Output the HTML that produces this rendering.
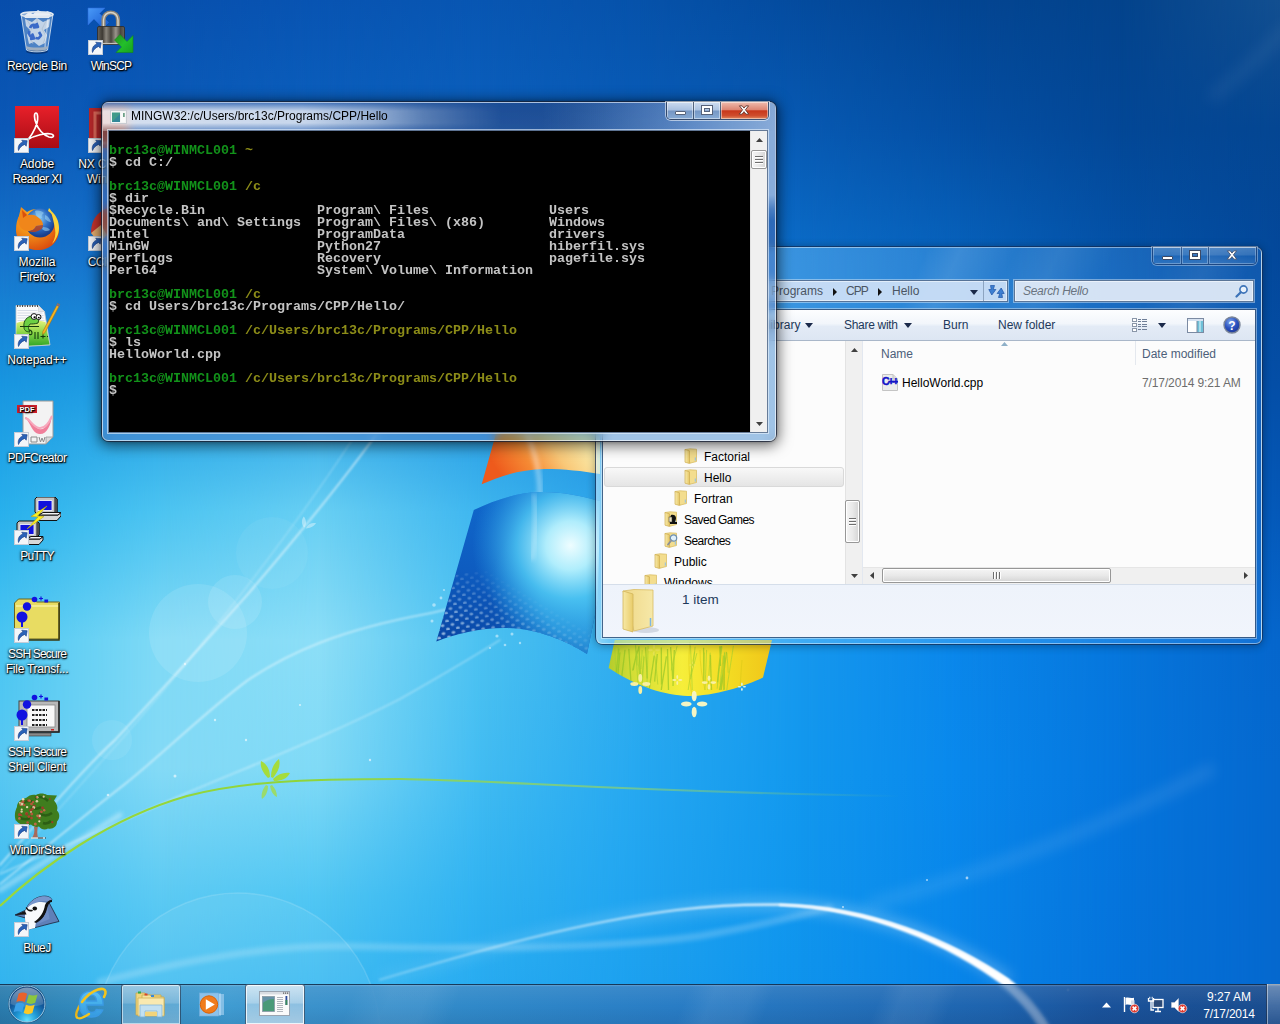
<!DOCTYPE html>
<html>
<head>
<meta charset="utf-8">
<title>Desktop</title>
<style>
*{box-sizing:border-box;margin:0;padding:0}
html,body{width:1280px;height:1024px;overflow:hidden}
body{position:relative;font-family:"Liberation Sans",sans-serif;font-size:12px;color:#000;background:#1878d0}
.abs{position:absolute}
#wall{position:absolute;left:0;top:0;width:1280px;height:1024px;overflow:hidden}
.wl{position:absolute;left:0;top:0;width:1280px;height:1024px}
#wallsvg{position:absolute;left:0;top:0}
/* ---------- desktop icons ---------- */
.dicon{position:absolute;width:74px;height:90px;text-align:center;color:#fff;font-size:12px;line-height:15px;
 text-shadow:0 1px 2px #000,0 0 3px rgba(0,0,0,.85),1px 1px 1px rgba(0,0,0,.9)}
.dicon svg{position:absolute;left:13px;top:0}
.dicon span{position:absolute;left:-6px;right:-6px;top:52px;display:block;white-space:nowrap}
.dicon i{font-style:normal}
/* ---------- taskbar ---------- */
#taskbar{position:absolute;left:0;top:984px;width:1280px;height:40px;
 background:linear-gradient(180deg,rgba(18,44,72,.85) 0,rgba(18,44,72,.85) 1px,rgba(255,255,255,.28) 1px,rgba(255,255,255,.12) 2px,rgba(255,255,255,.07) 3px,rgba(255,255,255,0) 55%,rgba(0,10,40,.08) 100%),
 linear-gradient(90deg,rgba(42,118,166,.9) 0,rgba(47,130,180,.9) 60px,rgba(58,144,196,.9) 150px,rgba(62,152,206,.9) 230px,rgba(58,142,200,.9) 300px,rgba(48,132,196,.9) 500px,rgba(42,120,192,.9) 700px,rgba(36,104,176,.9) 900px,rgba(32,96,168,.9) 1000px,rgba(28,79,148,.9) 1100px,rgba(28,74,136,.9) 1280px)}
/* ---------- windows ---------- */
.win{position:absolute}
#expl{left:596px;top:247px;width:666px;height:397px;box-shadow:0 0 0 1px rgba(20,45,85,.72),0 1px 8px 1px rgba(0,0,0,.32)}
#explglass{background:linear-gradient(90deg,rgba(200,238,255,.6) 0,rgba(170,225,255,.5) 12px,rgba(120,200,255,.42) 200px,rgba(100,185,255,.3) 400px,rgba(80,160,250,.18) 100%);border-color:rgba(255,255,255,.45)}
#explglass:after{content:"";position:absolute;left:0;right:0;top:0;height:62px;background:linear-gradient(115deg,rgba(255,255,255,0) 300px,rgba(255,255,255,.10) 330px,rgba(255,255,255,.02) 380px,rgba(255,255,255,.08) 420px,rgba(255,255,255,0) 470px,rgba(255,255,255,0) 520px,rgba(255,255,255,.06) 560px,rgba(255,255,255,0) 600px)}
.capbtns.inact{border-color:rgba(30,60,110,.7);box-shadow:0 0 0 1px rgba(255,255,255,.35)}
.inact .cb{background:linear-gradient(180deg,rgba(255,255,255,.22) 0,rgba(255,255,255,.14) 48%,rgba(255,255,255,.02) 52%,rgba(255,255,255,.10) 100%);border-right-color:rgba(30,60,110,.6);box-shadow:inset 0 0 0 1px rgba(255,255,255,.28)}
.inact .cmin i,.inact .cmax i{border-color:#fff;outline-color:#3d4a66}
.inact .cmin i{border-color:#3d4a66}
.inact .cmax i{box-shadow:inset 0 0 0 1px #3d4a66}
#addr{position:absolute;left:53px;top:33px;width:359px;height:22px;background:rgba(205,224,246,.93);border:1px solid rgba(50,80,120,.75);box-shadow:0 0 0 1px rgba(255,255,255,.4),inset 0 0 0 1px rgba(255,255,255,.5)}
.crumb{position:absolute;top:3px;font-size:12px;line-height:15px;color:#4a5563;white-space:nowrap}
.tri{position:absolute;top:7px;width:0;height:0;border-left:4px solid #111;border-top:4px solid transparent;border-bottom:4px solid transparent}
.dtri{position:absolute;width:0;height:0;border-top:5px solid #1b2a4a;border-left:4.5px solid transparent;border-right:4.5px solid transparent}
#srch{position:absolute;left:418px;top:33px;width:240px;height:22px;background:rgba(222,233,247,.95);border:1px solid rgba(50,80,120,.75);box-shadow:0 0 0 1px rgba(255,255,255,.4),inset 0 0 0 1px rgba(255,255,255,.5)}
#srch span{position:absolute;left:8px;top:3px;letter-spacing:-.3px;font-style:italic;color:#6a7480;font-size:12px;line-height:15px;white-space:nowrap}
#eclient{position:absolute;left:7px;top:63px;width:652px;height:327px;background:#fcfcfc;box-shadow:0 0 0 1px rgba(40,70,110,.8),0 0 0 2px rgba(255,255,255,.4);overflow:hidden}
#tbar{position:absolute;left:0;top:0;width:652px;height:31px;background:linear-gradient(180deg,#fdfeff 0,#f2f6fb 45%,#e3ebf6 55%,#dde6f3 100%);border-bottom:1px solid #a9b7c9}
.ti{position:absolute;top:8px;font-size:12px;line-height:15px;color:#1e395b;white-space:nowrap}
#nav{position:absolute;left:0;top:31px;width:242px;height:243px;overflow:hidden;background:#fcfcfc}
.trow{position:absolute;height:20px;white-space:nowrap;font-size:12px;line-height:20px;color:#000}
.trow .fld{position:absolute;left:0;top:2px;width:16px;height:16px}
.trow span{position:absolute;left:21px;top:1px}
#hl{position:absolute;left:1px;top:126px;width:240px;height:20px;border:1px solid #d9d9d9;border-radius:3px;background:linear-gradient(180deg,#f8f8f8,#e5e5e5)}
#flist{position:absolute;left:260px;top:31px;width:392px;height:226px;background:#fcfcfc}
.ch{position:absolute;top:6px;font-size:12px;line-height:15px;color:#4c607a;white-space:nowrap}
.fn{position:absolute;font-size:12px;line-height:15px;white-space:nowrap}
#hsb{position:absolute;left:260px;top:257px;width:392px;height:17px;background:#f0f0f0;border-top:1px solid #e6e6e6}
#hthumb{position:absolute;left:19px;top:0px;width:229px;height:15px;border:1px solid #979797;border-radius:2px;background:linear-gradient(180deg,#f5f5f5 0,#e9e9e9 50%,#d4d4d4 100%);box-shadow:inset 0 0 0 1px #fff}
#hthumb i{position:absolute;left:50%;margin-left:-4px;top:3px;bottom:3px;width:8px;background:repeating-linear-gradient(90deg,#6e6e6e 0,#6e6e6e 1px,#fff 1px,#fff 2px,transparent 2px,transparent 3px)}
#dpane{position:absolute;left:0;top:274px;width:652px;height:53px;background:linear-gradient(180deg,#eef3fb,#f1f5fc);border-top:1px solid #d5deea}
.tbstripes{position:absolute;left:0;top:1px;width:1280px;height:39px;background:linear-gradient(112deg,rgba(255,255,255,0) 330px,rgba(255,255,255,.07) 365px,rgba(255,255,255,.07) 400px,rgba(255,255,255,0) 430px,rgba(255,255,255,0) 640px,rgba(255,255,255,.07) 665px,rgba(255,255,255,.06) 700px,rgba(255,255,255,0) 720px,rgba(255,255,255,0) 820px,rgba(255,255,255,.07) 840px,rgba(255,255,255,.06) 870px,rgba(255,255,255,0) 890px)}
.tbtn{position:absolute;top:0px;height:40px;border:1px solid rgba(20,50,80,.7);border-bottom:none;border-radius:3px 3px 0 0;background:linear-gradient(180deg,rgba(255,255,255,.45) 0,rgba(255,255,255,.30) 45%,rgba(255,255,255,.18) 50%,rgba(255,255,255,.28) 100%);box-shadow:inset 0 0 0 1px rgba(255,255,255,.55)}
.tbtn.act{background:linear-gradient(180deg,rgba(255,255,255,.72) 0,rgba(255,255,255,.55) 45%,rgba(255,255,255,.42) 50%,rgba(255,255,255,.55) 100%);box-shadow:inset 0 0 0 1px rgba(255,255,255,.8)}
.clock{position:absolute;left:1196px;top:5px;width:66px;text-align:center;color:#fff;font-size:12px;line-height:17px;white-space:nowrap}
.clock div+div{letter-spacing:-.2px}
.showdesk{position:absolute;left:1266px;top:0;width:14px;height:40px;border-left:1px solid rgba(20,40,70,.7);background:linear-gradient(180deg,rgba(255,255,255,.30),rgba(255,255,255,.08));box-shadow:inset 1px 0 0 rgba(255,255,255,.45),inset 0 1px 0 rgba(255,255,255,.4)}

.win{position:absolute;border-radius:7px;box-shadow:0 0 0 1px rgba(25,35,55,.78),0 2px 14px 3px rgba(0,0,0,.55),0 0 4px rgba(0,0,0,.4)}
.glass{position:absolute;left:0;top:0;right:0;bottom:0;border-radius:6px;border:1px solid rgba(255,255,255,.65)}
#term{left:102px;top:102px;width:674px;height:339px}
#termblur{position:absolute;left:0;top:0;right:0;bottom:0;border-radius:6px;-webkit-backdrop-filter:blur(5px);backdrop-filter:blur(5px)}
#termglass{background:rgb(142,184,228);mix-blend-mode:multiply;border:none}
#termglass2{position:absolute;left:0;top:0;right:0;bottom:0;border-radius:6px;background:linear-gradient(180deg,rgb(30,34,22) 0,rgb(40,44,34) 30px,rgb(42,44,34) 100%);mix-blend-mode:screen}
#termglass3{position:absolute;left:0;top:0;right:0;bottom:0;border-radius:6px;border:1px solid rgba(255,255,255,.62)}
.titleglow{position:absolute;left:1px;top:1px;width:400px;height:28px;border-radius:5px 0 0 0;background:linear-gradient(90deg,rgba(255,246,248,.86) 0,rgba(255,255,255,.8) 30px,rgba(255,255,255,.74) 200px,rgba(255,255,255,.52) 270px,rgba(255,255,255,.26) 320px,rgba(255,255,255,.1) 365px,rgba(255,255,255,0) 400px);-webkit-mask-image:linear-gradient(180deg,rgba(0,0,0,.25) 0,#000 8px,#000 20px,rgba(0,0,0,.35) 28px);mask-image:linear-gradient(180deg,rgba(0,0,0,.25) 0,#000 8px,#000 20px,rgba(0,0,0,.35) 28px)}
.tdark{position:absolute;left:1px;top:1px;right:1px;height:28px;border-radius:5px 5px 0 0;background:linear-gradient(90deg,rgba(8,36,84,0) 200px,rgba(8,36,84,.26) 330px,rgba(8,36,84,.26) 470px,rgba(8,36,84,0) 600px)}
.wtitle{position:absolute;left:29px;top:7px;font-size:12px;line-height:15px;white-space:nowrap;color:#000;letter-spacing:0px}
.capbtns{position:absolute;top:0;height:18px;display:flex;border:1px solid rgba(40,55,80,.75);border-top:none;border-radius:0 0 5px 5px;box-shadow:0 0 0 1px rgba(255,255,255,.55);overflow:hidden}
.cb{height:17px;position:relative;border-right:1px solid rgba(40,55,80,.7);box-shadow:inset 0 0 0 1px rgba(255,255,255,.45)}
.cb:last-child{border-right:none}
.cmin,.cmax{width:27px;background:linear-gradient(180deg,rgba(225,235,248,.85) 0,rgba(190,208,232,.8) 48%,rgba(120,152,196,.9) 52%,rgba(140,175,215,.9) 100%)}
.cclose{width:47px;background:linear-gradient(180deg,#efbcae 0,#dd8673 45%,#c8371b 52%,#cf4d2d 80%,#e08b62 100%)}
.cclose svg{position:absolute;left:17px;top:3px;width:12px;height:10px}
.cmin i{position:absolute;left:8px;top:9px;width:11px;height:4px;background:#fff;border:1px solid #56627a;border-radius:1px}
.cmax i{position:absolute;left:8px;top:4px;width:10px;height:8px;background:transparent;border:2px solid #fff;outline:1px solid #56627a;box-shadow:inset 0 0 0 1px #56627a}
#termclient{position:absolute;left:7px;top:29px;width:658px;height:301px;background:#000;box-shadow:0 0 0 1px rgba(70,90,120,.75),0 0 0 2px rgba(235,245,255,.6)}
#tt{position:absolute;left:0;top:1.5px;font-family:"Liberation Mono",monospace;font-weight:bold;font-size:13.333px;line-height:12px;color:#c4c4c4;letter-spacing:0}
#tt b{font-weight:bold}
#tt .g{color:#12921a}
#tt .y{color:#8c8c18}
.vsb{position:absolute;width:17px;background:#f0f0f0;border-left:1px solid #e3e3e3}
.sbtn{position:absolute;left:0;width:17px;height:17px}
.sbtn svg{position:absolute;left:4px;top:6px}
.sthumb{position:absolute;left:0px;width:16px;border:1px solid #979797;border-radius:2px;background:linear-gradient(90deg,#f5f5f5 0,#e9e9e9 50%,#d4d4d4 100%);box-shadow:inset 0 0 0 1px #fff}
.sthumb i{position:absolute;left:3px;right:3px;top:50%;margin-top:-4px;height:8px;background:repeating-linear-gradient(180deg,#6e6e6e 0,#6e6e6e 1px,#fff 1px,#fff 2px,transparent 2px,transparent 3px)}

.refl1{position:absolute;left:440px;top:1px;right:1px;height:28px;border-radius:0 5px 0 0;background:linear-gradient(90deg,rgba(190,214,242,0) 0,rgba(190,214,242,.12) 60px,rgba(190,214,242,.3) 130px,rgba(190,214,242,.5) 190px,rgba(196,218,244,.62) 100%)}
.refl2{position:absolute;right:1px;top:29px;width:8px;height:90px;background:linear-gradient(180deg,rgba(196,218,244,.62) 0,rgba(196,218,244,.6) 64px,rgba(196,218,244,.2) 78px,rgba(196,218,244,0) 90px)}

</style>
</head>
<body>
<div id="wall">
<div class="wl" style="background:linear-gradient(180deg,#084eac 0px,#0b58b6 128px,#1674cc 256px,#1896e0 384px,#28b0ec 512px,#4ac6f2 640px,#58c8f2 768px,#40bcf0 896px,#2cb0ee 1024px);"></div>
<div class="wl" style="background:linear-gradient(180deg,#0850ae 0px,#0b5cba 128px,#1672cc 256px,#229ee4 384px,#4cc4f1 512px,#80daf6 640px,#84daf6 768px,#5ccaf3 896px,#3cbaf1 1024px);-webkit-mask-image:linear-gradient(90deg,transparent 0px,#000 160px);mask-image:linear-gradient(90deg,transparent 0px,#000 160px);"></div>
<div class="wl" style="background:linear-gradient(180deg,#0854b2 0px,#0b60be 128px,#1572cc 256px,#28a2e6 384px,#68cff3 512px,#8cdef7 640px,#80daf6 768px,#50c6f3 896px,#36b6f1 1024px);-webkit-mask-image:linear-gradient(90deg,transparent 160px,#000 320px);mask-image:linear-gradient(90deg,transparent 160px,#000 320px);"></div>
<div class="wl" style="background:linear-gradient(180deg,#0856b2 0px,#0b60be 128px,#1270ca 256px,#2496e0 384px,#3eb6ef 512px,#4cc2f1 640px,#42bcf2 768px,#30b2f1 896px,#24a8f0 1024px);-webkit-mask-image:linear-gradient(90deg,transparent 320px,#000 480px);mask-image:linear-gradient(90deg,transparent 320px,#000 480px);"></div>
<div class="wl" style="background:linear-gradient(180deg,#0652aa 0px,#095cb8 128px,#0e70cc 256px,#1884d6 384px,#2aa2ea 512px,#2eaaee 640px,#26a8f0 768px,#20a4f0 896px,#1a9eee 1024px);-webkit-mask-image:linear-gradient(90deg,transparent 480px,#000 640px);mask-image:linear-gradient(90deg,transparent 480px,#000 640px);"></div>
<div class="wl" style="background:linear-gradient(180deg,#044b9e 0px,#0759b2 128px,#0b6cc8 256px,#0e74ce 384px,#1488de 512px,#1698ee 640px,#1298ee 768px,#1096ee 896px,#0e92ec 1024px);-webkit-mask-image:linear-gradient(90deg,transparent 640px,#000 800px);mask-image:linear-gradient(90deg,transparent 640px,#000 800px);"></div>
<div class="wl" style="background:linear-gradient(180deg,#034592 0px,#044fa4 128px,#0762bc 256px,#0968c4 384px,#0c78d6 512px,#0a86ea 640px,#0988ec 768px,#0886ea 896px,#0884e8 1024px);-webkit-mask-image:linear-gradient(90deg,transparent 800px,#000 960px);mask-image:linear-gradient(90deg,transparent 800px,#000 960px);"></div>
<div class="wl" style="background:linear-gradient(180deg,#03438c 0px,#034796 128px,#0452a8 256px,#055ab6 384px,#0668c8 512px,#0676dc 640px,#0576de 768px,#0574dc 896px,#0572da 1024px);-webkit-mask-image:linear-gradient(90deg,transparent 960px,#000 1120px);mask-image:linear-gradient(90deg,transparent 960px,#000 1120px);"></div>
<div class="wl" style="background:linear-gradient(180deg,#124f90 0px,#044692 128px,#03489a 256px,#044ea6 384px,#0458b8 512px,#0566cc 640px,#0568ce 768px,#0568ce 896px,#0568ce 1024px);-webkit-mask-image:linear-gradient(90deg,transparent 1120px,#000 1280px);mask-image:linear-gradient(90deg,transparent 1120px,#000 1280px);"></div>
</div>
<svg id="wallsvg" width="1280" height="1024" viewBox="0 0 1280 1024">
<defs>
 <filter id="b2" x="-20%" y="-20%" width="140%" height="140%"><feGaussianBlur stdDeviation="2"/></filter>
 <filter id="b1" x="-20%" y="-20%" width="140%" height="140%"><feGaussianBlur stdDeviation="0.8"/></filter>
 <filter id="b6" x="-30%" y="-30%" width="160%" height="160%"><feGaussianBlur stdDeviation="7"/></filter>
 <filter id="b20" x="-50%" y="-50%" width="200%" height="200%"><feGaussianBlur stdDeviation="22"/></filter>
 <linearGradient id="flB" x1=".4" y1="0" x2=".15" y2="1"><stop offset="0" stop-color="#1068cc"/><stop offset=".5" stop-color="#0e5cc0"/><stop offset="1" stop-color="#0844a2"/></linearGradient>
 <radialGradient id="flBh" cx=".82" cy=".33" r=".6"><stop offset="0" stop-color="#eefdff" stop-opacity="1"/><stop offset=".25" stop-color="#b4f0fd" stop-opacity=".97"/><stop offset=".55" stop-color="#4cc4f2" stop-opacity=".85"/><stop offset="1" stop-color="#2aa0e6" stop-opacity="0"/></radialGradient>
 <radialGradient id="flBh2" cx=".95" cy=".62" r=".62"><stop offset="0" stop-color="#40b8ee" stop-opacity=".95"/><stop offset=".5" stop-color="#34aae8" stop-opacity=".75"/><stop offset="1" stop-color="#2090e0" stop-opacity="0"/></radialGradient>
 <linearGradient id="flR" x1="0" y1=".3" x2="1" y2="0"><stop offset="0" stop-color="#ee5a1c"/><stop offset=".28" stop-color="#f58a34"/><stop offset=".55" stop-color="#f9c878"/><stop offset=".82" stop-color="#faeaa8"/><stop offset="1" stop-color="#fbf0b8"/></linearGradient>
 <linearGradient id="flY" x1="0" y1="0" x2="1" y2="0"><stop offset="0" stop-color="#b4cc2c"/><stop offset=".15" stop-color="#d4de36"/><stop offset=".45" stop-color="#f6ee3a"/><stop offset=".75" stop-color="#f3da22"/><stop offset="1" stop-color="#f0c61a"/></linearGradient>
 <g id="fl4"><ellipse cx="0" cy="-6" rx="1.900" ry="4"/><ellipse cx="0" cy="6" rx="1.900" ry="4"/><ellipse cx="-6" cy="0" rx="4" ry="1.900"/><ellipse cx="6" cy="0" rx="4" ry="1.900"/></g>
 <linearGradient id="arcG" x1="379" y1="0" x2="1010" y2="0" gradientUnits="userSpaceOnUse"><stop offset="0" stop-color="#fff" stop-opacity=".25"/><stop offset=".45" stop-color="#fff" stop-opacity=".7"/><stop offset=".7" stop-color="#fff" stop-opacity="1"/><stop offset="1" stop-color="#fff" stop-opacity="1"/></linearGradient>
 <linearGradient id="vineG" x1="0" y1="0" x2="900" y2="0" gradientUnits="userSpaceOnUse"><stop offset="0" stop-color="#9ad83a"/><stop offset=".35" stop-color="#8fd43a"/><stop offset=".7" stop-color="#9ad860" stop-opacity=".6"/><stop offset="1" stop-color="#9ad860" stop-opacity="0"/></linearGradient>
 <pattern id="dots" width="10" height="8" patternUnits="userSpaceOnUse" patternTransform="rotate(-7)"><ellipse cx="3" cy="3" rx="1.900" ry="1.400" fill="#e6f8ff" opacity=".9"/><ellipse cx="8" cy="7" rx="1.900" ry="1.400" fill="#e6f8ff" opacity=".9"/></pattern>
 <linearGradient id="dmg" x1="0" y1="1" x2="1" y2="0"><stop offset="0" stop-color="#ddd"/><stop offset=".3" stop-color="#888"/><stop offset=".62" stop-color="#000"/></linearGradient>
 <mask id="dotmask" maskUnits="userSpaceOnUse" x="430" y="560" width="175" height="100"><rect x="430" y="560" width="175" height="100" fill="url(#dmg)"/></mask>
</defs>
<!-- soft light blobs -->
<circle cx="198" cy="633" r="49" fill="#fff" opacity=".11"/>
<circle cx="235" cy="602" r="27" fill="#fff" opacity=".11"/>
<circle cx="272" cy="553" r="36" fill="#fff" opacity=".05"/>
<circle cx="112" cy="740" r="20" fill="#fff" opacity=".08"/>
<circle cx="238" cy="1035" r="142" fill="#fff" opacity=".07"/>
<circle cx="238" cy="1035" r="142" fill="none" stroke="#fff" stroke-width="1.500" opacity=".14"/>
<!-- streaks -->
<g fill="none" stroke="#fff" stroke-linecap="round">
 <path d="M0 865C40 820 80 772 115 740 160 692 205 642 248 594 290 545 340 485 378 432" stroke-width="1.700" opacity=".6" filter="url(#b1)"/>
 <path d="M0 872C45 826 88 776 121 740 200 650 290 535 352 440" stroke-width="1" opacity=".4" filter="url(#b1)"/>
 <path d="M0 884C45 848 85 815 125 784 165 752 205 712 248 680 290 652 340 630 426 614 450 609 470 604 490 600" stroke-width="1.600" opacity=".55" filter="url(#b1)"/>
 <path d="M0 874C60 848 125 820 187 793 260 762 330 735 400 699 430 682 460 665 500 640" stroke-width="1.400" opacity=".42" filter="url(#b1)"/>
 <path d="M0 890C40 865 80 840 120 815" stroke-width="5" opacity=".4" filter="url(#b2)"/>
 <path d="M100 982C200 956 280 946 340 946 450 949 600 950 700 936 760 926 800 915 830 908" stroke-width="7" opacity=".2" filter="url(#b2)"/>
 <path d="M870 905C960 880 1080 840 1210 770" stroke-width="9" opacity=".13" filter="url(#b6)"/>
 <path d="M1215 95C1240 75 1262 55 1285 30" stroke-width="14" opacity=".05" filter="url(#b6)"/>
</g>
<!-- big white arc bottom -->
<path d="M379 980C480 950 580 922 677 910 720 905 750 904 779 904.700 870 907 950 940 1009 981" fill="none" stroke="url(#arcG)" stroke-width="9" opacity=".35" filter="url(#b6)"/>
<path d="M379 980C480 950 580 922 677 910 720 905 750 904 779 904.700 870 907 950 940 1009 981" fill="none" stroke="url(#arcG)" stroke-width="2.200" filter="url(#b1)"/>
<path d="M779 904.200C870 906 952 940 1012 981 1030 996 1040 1010 1052 1030L1040 1030C1030 1014 1019 1000 1004 986 949 945 870 909.500 779 905.700Z" fill="#fff" filter="url(#b1)"/>
<!-- green vine -->
<path d="M0 906C40 868 110 818 187 796 240 782 300 779 400 779 500 780 620 792 900 796" fill="none" stroke="url(#vineG)" stroke-width="2.200"/>
<g fill="#a5dc3c"><path d="M268 778c-6-6-8-12-7-17 6 3 9 9 9 16zM271 777c0-8 3-14 8-18 2 7-1 13-6 19zM273 779c5-5 11-7 17-6-3 6-9 8-16 8z"/><path d="M266 785c-4 5-5 10-4 14 4-3 6-8 6-13zM270 786c1 5 3 9 7 11 0-5-2-9-5-12z" opacity=".75"/></g>
<g transform="translate(305 528) rotate(25)" fill="#fff" opacity=".4"><path d="M-1 0c-4-2-6-6-5-10 4 2 6 6 5 10z"/><path d="M1 0c0-5 3-8 7-9-1 4-3 7-7 9z"/></g>
<!-- windows flag -->
<g>
 <path d="M497 430L481.700 484.300C500 476 520 469.500 545 469 565 469 582 471 600 474L600 430Z" fill="url(#flR)"/>
 <path d="M526 430C534 450 540 470 540 492 540 510 538 525 536 540" fill="none" stroke="#fff" stroke-width="5" opacity=".38" filter="url(#b2)"/>
 <path d="M473.800 510C495 500 515 493 540 492 562 491.500 580 496 600 501L598 600 587 654C565 640 535 628 504 628 480 628 455 634 436.300 641.600Z" fill="url(#flB)"/>
 <path d="M473.800 510C495 500 515 493 540 492 562 491.500 580 496 600 501L598 600 587 654C565 640 535 628 504 628 480 628 455 634 436.300 641.600Z" fill="url(#flBh2)"/>
 <path d="M473.800 510C495 500 515 493 540 492 562 491.500 580 496 600 501L598 600 587 654C565 640 535 628 504 628 480 628 455 634 436.300 641.600Z" fill="url(#flBh)"/>
 <path d="M456 575C500 566 550 566 598 578L587 654C565 640 535 628 504 628 480 628 455 634 436.300 641.600Z" fill="url(#dots)" mask="url(#dotmask)"/>
 <path d="M534 494C537 515 536 535 532 560" fill="none" stroke="#fff" stroke-width="4" opacity=".3" filter="url(#b2)"/>
 <g fill="#e8f8ff" opacity=".55"><circle cx="434" cy="605" r="1.800"/><circle cx="441" cy="598" r="1.400"/><circle cx="432" cy="621" r="1.500"/><circle cx="444" cy="590" r="1.100"/><circle cx="497" cy="636" r="1.600"/><circle cx="512" cy="634" r="1.500"/><circle cx="505" cy="645" r="1.300"/><circle cx="520" cy="643" r="1.200"/><circle cx="490" cy="648" r="1.100"/></g>
 <clipPath id="ycp"><path d="M614.800 640L608.600 668C640 688 665 695 687.500 696 715 696 745 686 763 677.400L772 640Z"/></clipPath>
 <path d="M614.800 640L608.600 668C640 688 665 695 687.500 696 715 696 745 686 763 677.400L772 640Z" fill="url(#flY)"/>
 <g clip-path="url(#ycp)" fill="none"><path d="M638.9 646.2C639.5 658.2 640.0 667.2 640.3 676.1M625.0 649.8C623.0 668.0 621.0 681.7 620.0 690.0M703.6 647.7C703.7 661.3 703.8 671.5 703.8 681.8M639.0 646.3C636.5 656.0 634.0 663.4 632.7 670.7M710.4 654.7C710.8 671.5 711.3 684.1 711.5 690.0M654.7 652.5C652.5 668.5 650.3 680.5 649.2 690.0M721.3 646.0C719.8 660.5 718.3 671.4 717.6 682.2M670.6 647.1C671.5 660.0 672.3 669.7 672.7 679.3M724.2 655.4C724.2 669.2 724.2 679.5 724.2 689.8M726.5 651.9C724.4 669.7 722.2 683.0 721.1 690.0M674.3 650.0C673.8 664.4 673.3 675.1 673.0 685.9M628.8 648.7C629.8 665.6 630.8 678.3 631.4 690.0M619.9 652.5C619.0 663.1 618.0 671.0 617.6 678.9M667.5 649.1C667.9 668.3 668.3 682.7 668.5 690.0M661.3 647.4C661.4 662.2 661.5 673.3 661.5 684.4M657.3 654.0C656.3 665.0 655.2 673.3 654.7 681.6M719.8 646.2C720.1 654.2 720.4 660.1 720.5 666.1M704.1 652.4C704.0 662.4 703.9 670.0 703.8 677.5M637.3 650.5C635.7 658.2 634.1 664.0 633.3 669.8M726.1 656.5C723.5 672.5 720.8 684.5 719.5 690.0M618.9 648.5C617.0 667.3 615.1 681.4 614.2 690.0M666.4 656.3C664.4 671.0 662.3 682.0 661.3 690.0M645.6 647.3C646.2 659.8 646.9 669.2 647.2 678.6" stroke="#86c024" stroke-width="1.300" opacity=".6"/><path d="M654.9 656.5C656.1 667.7 657.2 676.1 657.8 684.5M618.0 647.0C617.8 663.6 617.5 676.1 617.4 688.5M648.1 646.2C647.6 665.1 647.1 679.4 646.8 690.0M635.6 645.7C636.2 653.6 636.7 659.5 637.0 665.4M695.1 646.8C694.4 654.5 693.6 660.3 693.2 666.0M644.2 657.0C643.3 665.6 642.3 672.1 641.9 678.6M706.6 649.9C705.9 669.0 705.2 683.3 704.9 690.0M642.2 649.9C641.8 657.6 641.3 663.3 641.0 669.0M643.8 655.7C643.0 672.8 642.2 685.7 641.8 690.0M614.9 648.1C615.2 658.2 615.6 665.7 615.8 673.3M637.3 655.4C638.3 664.3 639.3 671.0 639.8 677.7M724.4 651.8C724.0 670.9 723.6 685.2 723.4 690.0M724.6 652.8C722.8 669.5 721.0 682.1 720.1 690.0M677.1 646.1C674.8 655.8 672.5 663.1 671.3 670.4M723.5 656.1C722.1 667.3 720.7 675.8 720.0 684.2M710.2 652.7C709.3 669.7 708.4 682.4 707.9 690.0M696.8 653.2C694.3 663.7 691.8 671.5 690.6 679.3M733.4 645.9C730.7 664.7 728.1 678.9 726.8 690.0M690.5 645.5C691.2 663.5 691.9 677.0 692.2 690.0M726.9 653.0C727.4 660.9 728.0 666.9 728.2 672.8M694.5 651.8C692.0 668.0 689.5 680.1 688.2 690.0M635.4 645.0C636.5 663.3 637.7 677.0 638.2 690.0M722.0 646.4C720.1 663.3 718.1 676.0 717.2 688.7" stroke="#a4d030" stroke-width="1" opacity=".65"/>
 <path d="M690 642c-2 18-1 36 2 54M700 650c0 14 2 28 5 40M722 655c1 12 2 22 2 32M742 660c-1 10-1 18-2 26" stroke="#d8c818" stroke-width="1" opacity=".55"/></g>
 <g fill="#f8f0a2"><use href="#fl4" transform="translate(640.300 684) scale(1)"/><use href="#fl4" transform="translate(677.300 680) scale(.5)"/><use href="#fl4" transform="translate(709 682.600) scale(.72)"/></g>
 <g fill="#f0e85a" opacity=".7"><use href="#fl4" transform="translate(654 650) scale(.6)"/><use href="#fl4" transform="translate(692.500 665) scale(.35)"/></g>
 <use href="#fl4" transform="translate(694.200 704) scale(1.320)" fill="#f4f5c4"/>
 <use href="#fl4" transform="translate(741.900 686.800) scale(.42)" fill="#d8f4e8"/>
</g>
<!-- dots -->
<g fill="#fff" opacity=".6"><circle cx="175" cy="776" r="1.500"/><circle cx="108" cy="795" r="1.300"/><circle cx="215" cy="720" r="1.200"/><circle cx="185" cy="664" r="1.200"/><circle cx="246" cy="740" r="1.200"/><circle cx="300" cy="705" r="1.100"/><circle cx="370" cy="760" r="1.200"/><circle cx="967" cy="878" r="1.400"/><circle cx="843" cy="907" r="1.100"/><circle cx="1068" cy="990" r="1.400"/><circle cx="927" cy="880" r="1"/></g>

</svg>
<svg width="0" height="0" style="position:absolute"><defs>
 <g id="sc"><rect x="1.500" y="33.500" width="14" height="14" fill="#f4f6f9" stroke="#c4ccd8"/><path d="M5.500 45.500c-1-4 .8-7.500 4.500-8.500l-1.300-1.800 5.500.5-1 5.500-1.400-1.800c-2.800 1-5 2.800-6.300 6.100z" fill="#2a62b8" stroke="#1a3f86" stroke-width=".6"/></g>
 <linearGradient id="binG" x1="0" x2="1"><stop offset="0" stop-color="#dfe8f0" stop-opacity=".85"/><stop offset=".5" stop-color="#f6fafd" stop-opacity=".75"/><stop offset="1" stop-color="#b9c9d8" stop-opacity=".85"/></linearGradient>
 <linearGradient id="redG" x1="0" y1="0" x2="0" y2="1"><stop offset="0" stop-color="#e8202a"/><stop offset="1" stop-color="#a80c14"/></linearGradient>
 <radialGradient id="ffG" cx=".45" cy=".35" r=".6"><stop offset="0" stop-color="#8fd0f6"/><stop offset=".6" stop-color="#2b6cc4"/><stop offset="1" stop-color="#1a3f8c"/></radialGradient>
 <linearGradient id="foxG" x1="0" y1="0" x2="1" y2="1"><stop offset="0" stop-color="#f8b21c"/><stop offset=".5" stop-color="#ee7a16"/><stop offset="1" stop-color="#d9480e"/></linearGradient>
 <linearGradient id="lockG" x1="0" x2="1"><stop offset="0" stop-color="#8a8a8a"/><stop offset=".3" stop-color="#5c5c5c"/><stop offset=".6" stop-color="#9a9a9a"/><stop offset="1" stop-color="#5a5a5a"/></linearGradient>
</defs></svg>
<!-- Recycle Bin -->
<div class="dicon" style="left:0;top:7px"><svg width="48" height="48" viewBox="0 0 48 48">
 <ellipse cx="24" cy="44.500" rx="11" ry="2.500" fill="rgba(0,15,50,.4)"/>
 <path d="M8 7h32l-5.500 36c-4 2.500-17 2.500-21 0z" fill="rgba(190,212,235,.38)" stroke="rgba(225,236,246,.8)" stroke-width="1"/>
 <path d="M11 9l5-4 4 2 5-4 5 3 5-2 3 4-2 3H12z" fill="#f2f5f8" opacity=".92"/>
 <path d="M12 12l7 3 5-4 6 4 7-3-1 8-5 3 3 5-2 8-6 3-5-4-5 2-2-9 3-5-4-4z" fill="#e4eaf1" opacity=".78"/>
 <path d="M14 13l5 8-3 6 4 10M33 14l-4 8 4 7-3 8M24 12v7" stroke="#aab8c8" stroke-width=".8" fill="none" opacity=".8"/>
 <ellipse cx="24" cy="7.500" rx="16" ry="2.600" fill="none" stroke="#dfe8f0" stroke-width="1.600"/>
 <path d="M17 21c1-2.500 3-3.500 5-3l-1 2.500 4-.5-1.500-4M16.500 24c-1 2.500 0 5 2 6l1-2.500 1.500 4-4 .5M26 25l2 3.500-2.500 3-3-.5" fill="none" stroke="#3a6ac8" stroke-width="2.600" stroke-linejoin="round"/>
 <path d="M13.500 42c4 2.300 17 2.300 21 0l.5-3c-5 2-17 2-22 0z" fill="#a8b4c0" opacity=".9"/>
 <path d="M35 12l-3 28" stroke="#fff" stroke-width="1.500" opacity=".45"/>
</svg><span><i style="letter-spacing:-0.31px">Recycle Bin</i></span></div>
<!-- WinSCP -->
<div class="dicon" style="left:74px;top:7px"><svg width="48" height="48" viewBox="0 0 48 48">
 <defs><linearGradient id="wsB" x1="0" y1="0" x2="1" y2="1"><stop offset="0" stop-color="#4a9af8"/><stop offset="1" stop-color="#1458d0"/></linearGradient><linearGradient id="wsG" x1="0" y1="0" x2="1" y2="1"><stop offset="0" stop-color="#2a8a1c"/><stop offset=".5" stop-color="#22c02a"/><stop offset="1" stop-color="#18a020"/></linearGradient>
 <linearGradient id="wsL" x1="0" x2="1"><stop offset="0" stop-color="#6a655c"/><stop offset=".18" stop-color="#3e3a34"/><stop offset=".32" stop-color="#8a857c"/><stop offset=".5" stop-color="#4a463f"/><stop offset=".68" stop-color="#9a958c"/><stop offset=".85" stop-color="#4a463f"/><stop offset="1" stop-color="#6a655c"/></linearGradient></defs>
 <path d="M1 1h17l-5.500 5.500 9 9-5.500 5.500-9-9L1 18z" fill="url(#wsB)" stroke="#2a6ad8" stroke-width=".6"/>
 <path d="M16.500 20v-7c0-10 14.500-10 14.500 0v7" fill="none" stroke="#8a8478" stroke-width="4.200"/>
 <path d="M16.500 20v-7c0-10 14.500-10 14.500 0v7" fill="none" stroke="#d8d4c8" stroke-width="1.400"/>
 <rect x="10.500" y="19.500" width="27" height="18" rx="1.500" fill="url(#wsL)" stroke="#2e2a26" stroke-width=".8"/>
 <path d="M10.500 36.500h27" stroke="#c8c4ba" stroke-width="1.200"/>
 <path d="M46 45.500H29l5.500-5.500-7-7 5.500-5.500 7 7L46 28.500z" fill="url(#wsG)" stroke="#138a1a" stroke-width=".6"/>
 <use href="#sc"/>
</svg><span><i style="letter-spacing:-0.79px">WinSCP</i></span></div>
<!-- Adobe Reader -->
<div class="dicon" style="left:0;top:105px"><svg width="48" height="48" viewBox="0 0 48 48">
 <rect x="2" y="1" width="44" height="42" fill="url(#redG)"/>
 <path d="M14 35c3-2 8-10 10-17 1-4 1-10-1-10s-2 5 0 10c2 6 7 12 13 14 5 1.500 6-2 2-3-5-1-16 1-24 6z" fill="none" stroke="#fff" stroke-width="1.700" stroke-linejoin="round"/>
 <use href="#sc"/>
</svg><span><i style="letter-spacing:-0.14px">Adobe</i><br><i style="letter-spacing:-0.56px">Reader XI</i></span></div>
<!-- NX (mostly hidden) -->
<div class="dicon" style="left:74px;top:105px"><svg width="48" height="48" viewBox="0 0 48 48">
 <rect x="2" y="3" width="40" height="40" fill="#b8282a"/><rect x="8" y="8" width="30" height="30" fill="none" stroke="#e06a5a" stroke-width="3"/>
 <use href="#sc"/>
</svg><span><i style="letter-spacing:-0.2px">NX Client for</i><br><i style="letter-spacing:0px">Windows</i></span></div>
<!-- Firefox -->
<div class="dicon" style="left:0;top:203px"><svg width="48" height="48" viewBox="0 0 48 48">
 <defs><radialGradient id="ffO" cx=".35" cy=".3" r=".8"><stop offset="0" stop-color="#fbc02a"/><stop offset=".45" stop-color="#f08a18"/><stop offset="1" stop-color="#d8440c"/></radialGradient></defs>
 <path d="M3 27c0-6 1-10 3-14l2-9 6 5c3-2 6-3 10-3 12 0 22 9 22 21S37 47 25 47 3 39 3 27z" fill="url(#ffO)"/>
 <circle cx="27" cy="20" r="14.500" fill="url(#ffG)"/>
 <path d="M22 8c3-1 7 0 9 2-2 1-3 3-2 5-3 0-5-1-6-3zM32 12c3 1 5 4 6 7-3 0-4-2-6-3zM30 24c3 0 6 1 7 3-3 2-6 1-8-1z" fill="#9fd6f4" opacity=".55"/>
 <path d="M5 16l4-10 6 6c4-1 8 0 11 3 3 2 4 5 4 7l-7 1c-1 3-4 5-8 5-6 0-10-5-10-12z" fill="#f0861a"/>
 <path d="M9 7l5 5-4 3z" fill="#d8500e"/>
 <path d="M30 22l-7 1c-1 3-4 5-8 5 4 2 9 1 12-1 2-1 3-3 3-5z" fill="#c8400c" opacity=".8"/>
 <path d="M38 8c5 4 8 10 8 17 0 6-3 12-7 16 3-5 4-10 3-15-1-7-3-13-4-18z" fill="#fbd43a"/>
 <path d="M36 5c2 2 4 5 4 8-1-2-3-4-5-5z" fill="#fbd43a"/>
 <use href="#sc"/>
</svg><span><i style="letter-spacing:-0.05px">Mozilla</i><br><i style="letter-spacing:-0.27px">Firefox</i></span></div>
<!-- CCleaner (mostly hidden) -->
<div class="dicon" style="left:74px;top:203px"><svg width="48" height="48" viewBox="0 0 48 48">
 <path d="M4 30C4 14 14 4 30 4v30z" fill="#c8342c"/><path d="M4 30l10-8 6 10-8 8z" fill="#e8b070"/>
 <use href="#sc"/>
</svg><span><i style="letter-spacing:-0.50px">CCleaner</i></span></div>
<!-- Notepad++ -->
<div class="dicon" style="left:0;top:301px"><svg width="48" height="48" viewBox="0 0 48 48">
 <defs><linearGradient id="npG" x1="0" y1="0" x2="0" y2="1"><stop offset="0" stop-color="#e4f27a"/><stop offset=".45" stop-color="#8cd648"/><stop offset="1" stop-color="#2fa426"/></linearGradient></defs>
 <path d="M3 4.500h22.500l6 6 5.500 33.500-34 2z" fill="#fbfbfb" stroke="#c4c8cc" stroke-width=".8"/>
 <path d="M25.500 4.500v6h6z" fill="#e4e6ea" stroke="#c4c8cc" stroke-width=".6"/>
 <path d="M4 5h21" stroke="#4a4a4a" stroke-width="2.200" stroke-dasharray="1.100 1.400"/>
 <path d="M4.500 9.500h20M4.500 12h25M4.500 14.500h26M4.500 17h26M4.500 19.500h27" stroke="#cfd6e2" stroke-width=".8"/>
 <path d="M3.500 22c9-3 20-3 29-1l4 22.500-33.500 2z" fill="url(#npG)"/>
 <path d="M11 26c-1-6 3-11 9-11 3 0 5 1 6 3l-1 4c-3 1-6 1-8 1-2 2-2 5 0 8-3 0-6-1-6-5z" fill="#6cd044" stroke="#1f4f14" stroke-width="1"/>
 <circle cx="21" cy="15.500" r="2.900" fill="#fff" stroke="#111" stroke-width="1"/><circle cx="25.500" cy="16" r="2.500" fill="#fff" stroke="#111" stroke-width="1"/><circle cx="21.500" cy="16.300" r="1"/><circle cx="25.800" cy="16.600" r=".9"/>
 <path d="M7 25.500h19M16 29c2 0 3 1 3 3s-2 2-3 1M22 31v7M25 31v7M27.500 35.500h5M30 33.500v4M34 35.500h1" stroke="#143c0e" stroke-width="1.100" fill="none"/>
 <path d="M44.700 2.500l2.100 1.200-14.800 28-2.500 1.800.300-3z" fill="#f4b422" stroke="#9a6a14" stroke-width=".5"/><path d="M44.700 2.500l2.100 1.200-1.100 2.100-2.100-1.200z" fill="#7a6a8a"/>
 <use href="#sc"/>
</svg><span><i style="letter-spacing:0.02px">Notepad++</i></span></div>
<!-- PDFCreator -->
<div class="dicon" style="left:0;top:399px"><svg width="48" height="48" viewBox="0 0 48 48">
 <path d="M10 2h30v36l-7 7H10z" fill="#f3f3f3" stroke="#9a9a9a" stroke-width="1"/>
 <path d="M33 45v-7h7z" fill="#d8d8d8" stroke="#9a9a9a" stroke-width=".8"/>
 <path d="M12 18c5 0 8 10 14 12 6 2 10-6 13-14-1 10-5 20-13 19-7-1-9-12-14-17z" fill="#ee6a8a" opacity=".85"/>
 <path d="M12 19c5 1 8 9 14 10 6 1 10-5 13-12" fill="none" stroke="#f7a8bc" stroke-width="2"/>
 <rect x="4" y="6" width="20" height="8" fill="#d3202c"/><text x="14" y="12.800" font-family="Liberation Sans" font-weight="bold" font-size="7.500" fill="#fff" text-anchor="middle">PDF</text>
 <path d="M18 38h6v5h-6zM26 38l1.500 5 1.500-4 1.500 4 1.500-5" fill="none" stroke="#8a8a8a" stroke-width="1"/>
 <use href="#sc"/>
</svg><span><i style="letter-spacing:-0.50px">PDFCreator</i></span></div>
<!-- PuTTY -->
<div class="dicon" style="left:0;top:497px"><svg width="48" height="48" viewBox="0 0 48 48">
 <g stroke="#111" stroke-width="1" stroke-linejoin="round">
 <path d="M22 2l2-2h18l2 2v13l-2 2H24l-2-2z" fill="#c4c4c4"/><path d="M42 0l2 2v13l-2 2z" fill="#8a8a8a"/>
 <rect x="25" y="3.500" width="14" height="10" fill="#1212dc" stroke="#fff" stroke-width=".8"/>
 <path d="M26 18h19l3-2.500v3.500l-4 4.500H26z" fill="#d8d8d8"/><path d="M26 18h19l3-2.500H30z" fill="#f4f4f4"/>
 <path d="M4 26l2-2h18l2 2v12l-2 2H6l-2-2z" fill="#c4c4c4"/><path d="M24 24l2 2v12l-2 2z" fill="#8a8a8a"/>
 <rect x="7" y="27.500" width="14" height="10" fill="#1212dc" stroke="#fff" stroke-width=".8"/>
 <path d="M14 42h13l3-2.500v3.500l-4 4.500H14z" fill="#d8d8d8"/><path d="M14 42h13l3-2.500H18z" fill="#f4f4f4"/>
 </g>
 <path d="M34 9L18 19.500l7 .5L14 32l17-12.500-6.500-.5z" fill="#fff020" stroke="#b8a810" stroke-width=".6"/>
 <use href="#sc"/>
</svg><span><i style="letter-spacing:-0.75px">PuTTY</i></span></div>
<!-- SSH File Transfer -->
<div class="dicon" style="left:0;top:595px"><svg width="48" height="48" viewBox="0 0 48 48">
 <path d="M1.500 8l4-4h15l3 3h23v37H1.500z" fill="#e8dc62" stroke="#6a6420" stroke-width="1"/>
 <path d="M3 11h43" stroke="#f8f0a0" stroke-width="1.500"/><path d="M46 8v37H5" fill="none" stroke="#3a3a10" stroke-width="1.500"/>
 <circle cx="9" cy="22" r="5.500" fill="#1212e0"/><circle cx="14" cy="11.500" r="4.200" fill="#1212e0"/><circle cx="21.500" cy="4.500" r="2.800" fill="#1212e0"/>
 <path d="M9 27v5" stroke="#1212e0" stroke-width="2"/><path d="M26 3.500h4M28 1.500v4M32 5h2.500v2H32z" stroke="#1212e0" stroke-width="1.200" fill="#1212e0"/>
 <use href="#sc"/>
</svg><span><i style="letter-spacing:-0.80px">SSH Secure</i><br><i style="letter-spacing:-0.25px">File Transf...</i></span></div>
<!-- SSH Shell Client -->
<div class="dicon" style="left:0;top:693px"><svg width="48" height="48" viewBox="0 0 48 48">
 <rect x="6" y="8" width="40" height="31" fill="#b8b8b8" stroke="#444" stroke-width="1"/><path d="M46 8v31H8" fill="none" stroke="#222" stroke-width="1.500"/>
 <rect x="14" y="12" width="28" height="22" fill="#f8f8f8" stroke="#888" stroke-width=".8"/>
 <path d="M19 17h15M19 22h15M19 27h15M19 32h15" stroke="#222" stroke-width="1.800" stroke-dasharray="2.500 1"/>
 <rect x="12" y="40" width="26" height="3" fill="#8a8a8a" stroke="#333" stroke-width=".6"/><rect x="38" y="36" width="3" height="1.500" fill="#d02020"/>
 <circle cx="9" cy="22" r="5.500" fill="#1212e0"/><circle cx="14" cy="11.500" r="4.200" fill="#1212e0"/><circle cx="21.500" cy="4.500" r="2.800" fill="#1212e0"/>
 <path d="M9 27v5" stroke="#1212e0" stroke-width="2"/><path d="M26 3.500h4M28 1.500v4M32 5h2.500v2H32z" stroke="#1212e0" stroke-width="1.200" fill="#1212e0"/>
 <use href="#sc"/>
</svg><span><i style="letter-spacing:-0.80px">SSH Secure</i><br><i style="letter-spacing:-0.23px">Shell Client</i></span></div>
<!-- WinDirStat -->
<div class="dicon" style="left:0;top:791px"><svg width="48" height="48" viewBox="0 0 48 48">
 <path d="M21 36c1 4 0 8-2 11h6c-1-4-1-8 0-12z" fill="#a86a5a"/><path d="M18 47h14" stroke="#d8d8d8" stroke-width="1.500"/><path d="M25 47h9" stroke="#333" stroke-width="1" stroke-dasharray="5 2 1 3"/>
 <path d="M3 30c-2-5-1-10 1-14 0-5 4-8 9-9 3-3 7-4 10-3 3-2 8-2 11 0l10 .5-3 5c3 3 4 7 3 10 3 3 3 8 0 11 0 5-4 8-9 7-3 2-7 1-9-2-3 1-6 0-8-2-5 2-11 1-15-4z" fill="#3f7d1e"/>
 <path d="M8 14c3-4 8-5 12-3M22 7c5-2 10 0 13 3M6 26c4 3 9 3 12 0M26 22c4 3 9 3 13 0M18 16c3 2 7 2 10 0M30 32c3 1 6 0 8-2" stroke="#2c5e14" stroke-width="2.500" fill="none"/>
 <circle cx="17.0" cy="9.8" r="0.9" fill="#c06a48"/><circle cx="36.9" cy="8.0" r="0.9" fill="#9a3c28"/><circle cx="24.3" cy="6.2" r="1.2" fill="#d8c8a0"/><circle cx="13.6" cy="22.6" r="1.5" fill="#a8482c"/><circle cx="9.0" cy="12.1" r="1.3" fill="#c06a48"/><circle cx="6.5" cy="23.7" r="1.6" fill="#a8482c"/><circle cx="15.6" cy="9.6" r="1.3" fill="#a8482c"/><circle cx="26.4" cy="26.8" r="1.3" fill="#a8482c"/><circle cx="29.6" cy="16.9" r="1.4" fill="#9a3c28"/><circle cx="26.6" cy="24.8" r="1.4" fill="#d8c8a0"/><circle cx="21.1" cy="15.1" r="1.5" fill="#9a3c28"/><circle cx="18.5" cy="12.9" r="1.4" fill="#b8563a"/><circle cx="13.8" cy="23.4" r="1.2" fill="#9a3c28"/><circle cx="17.7" cy="19.4" r="1.6" fill="#9a3c28"/><circle cx="8.7" cy="18.4" r="1.0" fill="#e8d8b0"/><circle cx="23.6" cy="6.3" r="1.0" fill="#c06a48"/><circle cx="26.3" cy="30.3" r="1.1" fill="#e8d8b0"/><circle cx="18.0" cy="20.9" r="0.9" fill="#d8c8a0"/><circle cx="7.7" cy="13.6" r="1.4" fill="#c06a48"/><circle cx="6.4" cy="27.4" r="1.3" fill="#c06a48"/><circle cx="31.2" cy="19.3" r="1.2" fill="#c06a48"/><circle cx="30.7" cy="5.7" r="1.1" fill="#d8c8a0"/><circle cx="28.4" cy="20.8" r="1.4" fill="#b8563a"/><circle cx="9.2" cy="12.9" r="1.5" fill="#d8c8a0"/><circle cx="23.9" cy="10.3" r="1.3" fill="#d8c8a0"/><circle cx="39.3" cy="31.2" r="1.1" fill="#9a3c28"/><circle cx="20.6" cy="16.5" r="1.6" fill="#d8c8a0"/><circle cx="10.0" cy="10.6" r="1.4" fill="#b8563a"/><circle cx="11.3" cy="14.0" r="1.2" fill="#b8563a"/><circle cx="18.8" cy="23.1" r="1.4" fill="#b8563a"/><circle cx="24.6" cy="24.8" r="1.4" fill="#c06a48"/><circle cx="22.3" cy="32.9" r="1.5" fill="#c06a48"/><circle cx="19.7" cy="17.8" r="1.2" fill="#a8482c"/><circle cx="20.0" cy="11.1" r="1.2" fill="#b8563a"/><circle cx="8.4" cy="24.2" r="0.9" fill="#a8482c"/><circle cx="10.1" cy="8.2" r="1.3" fill="#e8d8b0"/><circle cx="6.8" cy="11.7" r="1.0" fill="#d8c8a0"/><circle cx="14.1" cy="16.1" r="1.2" fill="#e8d8b0"/><circle cx="8.6" cy="20.6" r="1.2" fill="#d8c8a0"/><circle cx="16.5" cy="9.6" r="1.1" fill="#c06a48"/><circle cx="14.6" cy="31.5" r="1.3" fill="#b8563a"/><circle cx="18.5" cy="27.1" r="1.4" fill="#a8482c"/><circle cx="15.9" cy="25.6" r="1.4" fill="#a8482c"/>
 <use href="#sc"/>
</svg><span><i style="letter-spacing:-0.26px">WinDirStat</i></span></div>
<!-- BlueJ -->
<div class="dicon" style="left:0;top:889px"><svg width="48" height="48" viewBox="0 0 48 48">
 <path d="M2 26l11-5c2-7 8-12 15-13.500 5-1 9 0 11 3l-3.500 2 10.500 20c-9 2-19 5-29.500 7.500-3-3-4-7-4-11z" fill="#5f80b8" stroke="#1a2238" stroke-width=".8" stroke-linejoin="round"/>
 <path d="M13 21c2-7 8-12 15-13.500 5-1 9 0 11 3l-4 2c-7-2-15 1-22 8.500z" fill="#7796cc"/>
 <path d="M12 22c3-5 8-8 14-9 3 0 6 0 8 1-1 8-5 15-11 19l-1 6-6 1.500c-3-3-4-7-4-11z" fill="#f8fafc"/>
 <path d="M39 11c-3 0-6 2-7 5-1 7-5 13-11 17l2 1c6-3 11-9 12-17 .5-2 2-4 4-4z" fill="#111"/>
 <path d="M22.500 36l14-6-2-13c-1 8-5 14-12 19z" fill="#6f8ec6"/>
 <path d="M2 26l10-4 1.500 3.500z" fill="#161616"/>
 <path d="M13.500 19c1 2 3 3 5.500 2.500" stroke="#111" stroke-width="1.600" fill="none" stroke-linecap="round"/><ellipse cx="21.800" cy="19.500" rx="2.300" ry="2" fill="#111"/>
 <use href="#sc"/>
</svg><span><i style="letter-spacing:-0.46px">BlueJ</i></span></div>

<div class="win" id="expl">
 <div class="glass" id="explglass"></div>
 <div class="capbtns inact" style="left:556px">
  <div class="cb cmin" style="width:29px"><i style="left:9px"></i></div><div class="cb cmax" style="width:27px"><i></i></div><div class="cb cclose"><svg width="14" height="12" viewBox="0 0 14 12"><path d="M1.5 1 L4.8 1 L7 3.7 L9.2 1 L12.5 1 L8.7 5.8 L12.7 11 L9.3 11 L7 8 L4.7 11 L1.3 11 L5.3 5.8Z" fill="#fff" stroke="#3d4a66" stroke-width="1" stroke-linejoin="round"/></svg></div>
 </div>
 <!-- address bar -->
 <div id="addr">
  <span class="crumb" style="left:121px">Programs</span><i class="tri" style="left:183px"></i>
  <span class="crumb" style="left:196px;letter-spacing:-.9px">CPP</span><i class="tri" style="left:228px"></i>
  <span class="crumb" style="left:242px">Hello</span>
  <i class="dtri" style="left:320px;top:9px"></i>
  <div class="abs" style="left:333px;top:0;width:1px;height:20px;background:#8da4c0"></div>
  <svg class="abs" style="left:338px;top:3px" width="17" height="15" viewBox="0 0 17 15"><path d="M2.500 1.500h4l-1.200 4h2.600L3.800 11 .8 5.500h2.400z" fill="#3d7fd2" stroke="#1f55a6" stroke-width=".7" stroke-linejoin="round"/><path d="M14.500 13.500h-4l1.200-4H9.100L13.200 4l3 5.500h-2.400z" fill="#3d7fd2" stroke="#1f55a6" stroke-width=".7" stroke-linejoin="round"/></svg>
 </div>
 <div id="srch"><span>Search Hello</span>
  <svg class="abs" style="left:220px;top:3px" width="14" height="14" viewBox="0 0 14 14"><circle cx="8.5" cy="5.5" r="3.6" fill="#e8f1fb" stroke="#3c73b8" stroke-width="1.6"/><path d="M5.8 8.2 L1.5 12.5" stroke="#3c73b8" stroke-width="2.2" stroke-linecap="round"/></svg>
 </div>
 <div id="eclient">
  <div id="tbar">
   <span class="ti" style="left:110px">Include in library</span><i class="dtri" style="left:202px;top:13px"></i>
   <span class="ti" style="left:241px;letter-spacing:-.3px">Share with</span><i class="dtri" style="left:301px;top:13px"></i>
   <span class="ti" style="left:340px">Burn</span>
   <span class="ti" style="left:395px">New folder</span>
   <svg class="abs" style="left:529px;top:8px" width="16" height="14" viewBox="0 0 16 14"><g fill="#fff" stroke="#8a96a8" stroke-width="1"><rect x=".5" y=".5" width="4" height="3"/><rect x=".5" y="5.5" width="4" height="3"/><rect x=".5" y="10.5" width="4" height="3"/></g><g stroke="#6f7f98" stroke-width="1"><path d="M6 1.5h3M10 1.5h5M6 3.5h3M10 3.5h5M6 6.5h3M10 6.5h5M6 8.5h3M10 8.5h5M6 11.5h3M10 11.5h5"/></g></svg>
   <i class="dtri" style="left:555px;top:13px"></i>
   <svg class="abs" style="left:584px;top:8px" width="17" height="15" viewBox="0 0 17 15"><rect x=".5" y=".5" width="16" height="14" fill="#fff" stroke="#7b8aa2"/><rect x="1" y="1" width="15" height="2" fill="#d7e3f2"/><rect x="10" y="3" width="6" height="11" fill="#6fc0d8"/><rect x="12" y="3" width="2" height="11" fill="#a9dcea"/><path d="M10 3v11" stroke="#7b8aa2"/></svg>
   <svg class="abs" style="left:620px;top:6px" width="18" height="18" viewBox="0 0 18 18"><defs><radialGradient id="hg" cx=".4" cy=".3" r=".8"><stop offset="0" stop-color="#7fa4ea"/><stop offset=".5" stop-color="#2c54c0"/><stop offset="1" stop-color="#1a2f8c"/></radialGradient></defs><circle cx="9" cy="9" r="8" fill="url(#hg)" stroke="#7a8598" stroke-width="1.4"/><text x="9" y="13.5" font-family="Liberation Sans" font-weight="bold" font-size="12" fill="#fff" text-anchor="middle">?</text></svg>
  </div>
  <!-- nav pane -->
  <div id="nav">
   <div class="trow" style="top:105px;left:80px"><svg class="fld"><use href="#fold"/></svg><span>Factorial</span></div>
   <div id="hl"></div>
   <div class="trow" style="top:126px;left:80px"><svg class="fld"><use href="#fold"/></svg><span>Hello</span></div>
   <div class="trow" style="top:147px;left:70px"><svg class="fld"><use href="#fold"/></svg><span>Fortran</span></div>
   <div class="trow" style="top:168px;left:60px"><svg class="fld"><use href="#fold"/><path d="M8 4c2-1 5 0 5 3c0 2-1 3-1 4h2v2H7v-2h2c0-1-2-2-2-4z" fill="#111"/><rect x="6" y="6" width="3" height="5" fill="#e8e0c0" stroke="#333" stroke-width=".5"/></svg><span style="letter-spacing:-.55px">Saved Games</span></div>
   <div class="trow" style="top:189px;left:60px"><svg class="fld"><use href="#fold"/><circle cx="10.5" cy="6" r="3.2" fill="#dff0fb" stroke="#6d8fb0" stroke-width="1.2"/><path d="M8.3 8.5L5 12.5" stroke="#8a8f98" stroke-width="1.8" stroke-linecap="round"/></svg><span style="letter-spacing:-.55px">Searches</span></div>
   <div class="trow" style="top:210px;left:50px"><svg class="fld"><use href="#fold"/></svg><span>Public</span></div>
   <div class="trow" style="top:231px;left:40px"><svg class="fld"><use href="#fold"/></svg><span>Windows</span></div>
  </div>
  <div class="vsb" style="left:242px;top:31px;height:243px;background:#f0f0f0">
   <div class="sbtn" style="top:0"><svg width="7" height="4" viewBox="0 0 7 4" style="left:5px;top:7px"><path d="M0 4 L3.5 0 L7 4Z" fill="#404040"/></svg></div>
   <div class="sthumb" style="top:159px;height:43px;left:-1px;width:15px"><i></i></div>
   <div class="sbtn" style="bottom:0"><svg width="7" height="4" viewBox="0 0 7 4" style="left:5px;top:7px"><path d="M0 0L7 0L3.500 4Z" fill="#404040"/></svg></div>
  </div>
  <div class="abs" style="left:259px;top:31px;width:1px;height:243px;background:#e3e8f0"></div>
  <!-- file list -->
  <div id="flist">
   <span class="ch" style="left:18px">Name</span>
   <svg class="abs" style="left:138px;top:1px" width="7" height="4" viewBox="0 0 7 4"><path d="M0 4L3.5 0L7 4Z" fill="#8fb0c8"/></svg>
   <div class="abs" style="left:272px;top:0;width:1px;height:24px;background:#e4e8ee"></div>
   <span class="ch" style="left:279px">Date modified</span>
   <svg class="abs" style="left:19px;top:33px" width="16" height="17" viewBox="0 0 16 17"><path d="M.5 .5H11L15.500 5V16.500H.5Z" fill="#ececec" stroke="#c4c4c4"/><path d="M11 .5V5H15.500" fill="#dcdcdc" stroke="#c4c4c4"/><text x="0" y="11" font-family="Liberation Sans" font-weight="bold" font-size="10.500" fill="#1414c8" stroke="#1414c8" stroke-width=".5" letter-spacing="-1.500">C++</text></svg>
   <span class="fn" style="left:39px;top:35px">HelloWorld.cpp</span>
   <span class="fn" style="left:279px;top:35px;color:#6d6d6d;letter-spacing:-.12px">7/17/2014 9:21 AM</span>
  </div>
  <!-- h scrollbar -->
  <div id="hsb">
   <svg class="abs" style="left:7px;top:4px" width="4" height="7" viewBox="0 0 4 7"><path d="M4 0L0 3.500L4 7Z" fill="#404040"/></svg>
   <div id="hthumb"><i></i></div>
   <svg class="abs" style="right:7px;top:4px" width="4" height="7" viewBox="0 0 4 7"><path d="M0 0L4 3.500L0 7Z" fill="#404040"/></svg>
  </div>
  <!-- details pane -->
  <div id="dpane">
   <svg class="abs" style="left:17px;top:3px" width="40" height="46" viewBox="0 0 40 46">
    <defs><linearGradient id="fg1" x1="0" x2="1"><stop offset="0" stop-color="#f7e9a6"/><stop offset="1" stop-color="#e9cc6a"/></linearGradient><linearGradient id="fg2" x1="0" x2="1"><stop offset="0" stop-color="#efd888"/><stop offset="1" stop-color="#f6e8a8"/></linearGradient></defs>
    <ellipse cx="26" cy="42" rx="13" ry="3" fill="rgba(120,130,150,.25)"/>
    <path d="M3 3L14 1.5L33 2V38L14 43Z" fill="url(#fg2)" stroke="#d9bd63" stroke-width=".8"/>
    <path d="M3 3L13 6V44L3 41Z" fill="url(#fg1)" stroke="#d2b55a" stroke-width=".8"/>
    <path d="M30.5 30v8" stroke="#7fb6e0" stroke-width="1.5"/>
   </svg>
   <span class="abs" style="left:79px;top:7px;font-size:13.5px;color:#1e395b;white-space:nowrap">1 item</span>
  </div>
 </div>
</div>
<svg width="0" height="0" style="position:absolute"><defs>
 <linearGradient id="fo1" x1="0" x2="1"><stop offset="0" stop-color="#f8ecb0"/><stop offset="1" stop-color="#e6c663"/></linearGradient>
 <g id="fold"><path d="M2 1.5L7 .8L13.5 1.2V13.5L7 15.2Z" fill="#f3dd8e" stroke="#d6b85c" stroke-width=".7"/><path d="M2 1.5L6.5 2.8V15.5L2 14.2Z" fill="url(#fo1)" stroke="#cfae52" stroke-width=".7"/><path d="M12.3 9.5v3.2" stroke="#8fc0e6" stroke-width="1"/></g>
</defs></svg>

<div class="win" id="term">
 <div id="termblur"></div><div class="glass" id="termglass"></div><div id="termglass2"></div><div class="tdark"></div><div class="refl1"></div><div class="refl2"></div><div id="termglass3"></div>
 <div class="titleglow"></div>
 <svg class="abs" style="left:8px;top:8px" width="17" height="14" viewBox="0 0 17 14">
  <rect x="0.5" y="0.5" width="16" height="13" fill="#f4f4f4" stroke="#c9ccd2"/>
  <rect x="2" y="2.5" width="8" height="9.5" fill="#3f9b8a"/>
  <path d="M2 12 L10 4 L10 12Z" fill="#2d7f9f" opacity=".7"/>
  <rect x="11" y="2.5" width="4" height="9.5" fill="#fafafa"/>
  <rect x="13.2" y="3" width="1.4" height="4" fill="#4a8a6a"/>
 </svg>
 <div class="wtitle">MINGW32:/c/Users/brc13c/Programs/CPP/Hello</div>
 <div class="capbtns" style="left:564px">
  <div class="cb cmin"><i></i></div><div class="cb cmax"><i></i></div><div class="cb cclose"><svg width="14" height="12" viewBox="0 0 14 12"><path d="M1.5 1 L4.8 1 L7 3.7 L9.2 1 L12.5 1 L8.7 5.8 L12.7 11 L9.3 11 L7 8 L4.7 11 L1.3 11 L5.3 5.8Z" fill="#fff" stroke="#5a2a22" stroke-width="1" stroke-linejoin="round"/></svg></div>
 </div>
 <div id="termclient">
<pre id="tt">

<b class="g">brc13c@WINMCL001</b> <b class="y">~</b>
$ cd C:/

<b class="g">brc13c@WINMCL001</b> <b class="y">/c</b>
$ dir
$Recycle.Bin              Program\ Files               Users
Documents\ and\ Settings  Program\ Files\ (x86)        Windows
Intel                     ProgramData                  drivers
MinGW                     Python27                     hiberfil.sys
PerfLogs                  Recovery                     pagefile.sys
Perl64                    System\ Volume\ Information

<b class="g">brc13c@WINMCL001</b> <b class="y">/c</b>
$ cd Users/brc13c/Programs/CPP/Hello/

<b class="g">brc13c@WINMCL001</b> <b class="y">/c/Users/brc13c/Programs/CPP/Hello</b>
$ ls
HelloWorld.cpp

<b class="g">brc13c@WINMCL001</b> <b class="y">/c/Users/brc13c/Programs/CPP/Hello</b>
$ </pre>
  <div class="vsb" style="left:641px;top:0;height:301px">
   <div class="sbtn" style="top:0"><svg width="7" height="4" viewBox="0 0 7 4" style="left:5px;top:7px"><path d="M0 4L3.500 0L7 4Z" fill="#404040"/></svg></div>
   <div class="sthumb" style="top:19px;height:19px"><i></i></div>
   <div class="sbtn" style="bottom:0"><svg width="7" height="4" viewBox="0 0 7 4" style="left:5px;top:7px"><path d="M0 0L7 0L3.500 4Z" fill="#404040"/></svg></div>
  </div>
 </div>
</div>

<div id="taskbar">
<div class="tbstripes"></div>
<svg class="abs" style="left:990px;top:1px" width="80" height="39" viewBox="0 0 80 39"><path d="M12 -4C32 12 44 24 56 44" stroke="#fff" stroke-width="9" opacity=".28" fill="none" filter="url(#b2)"/></svg>
<!-- start orb -->
<svg class="abs" style="left:6px;top:-2px" width="42" height="42" viewBox="0 0 42 42">
 <defs>
  <radialGradient id="orb" cx=".5" cy=".95" r=".95"><stop offset="0" stop-color="#5fe0ff"/><stop offset=".3" stop-color="#1f9ad6"/><stop offset=".6" stop-color="#125a9c"/><stop offset="1" stop-color="#0e3c74"/></radialGradient>
  <linearGradient id="orbhi" x1="0" y1="0" x2="0" y2="1"><stop offset="0" stop-color="#fff" stop-opacity=".85"/><stop offset="1" stop-color="#fff" stop-opacity=".25"/></linearGradient>
 </defs>
 <circle cx="21" cy="22" r="19" fill="rgba(10,40,80,.55)"/>
 <circle cx="21" cy="22" r="18" fill="url(#orb)" stroke="#9ccbe6" stroke-width="1"/>
 <path d="M4.5 22 A16.5 16.5 0 0 1 37.5 22 C30 25.5 12 25.5 4.5 22Z" fill="url(#orbhi)" opacity=".55"/>
 <g transform="translate(20.5 21.5) scale(1.28) translate(-19.6 -21)">
 <path d="M13.5 13.2c2.5-1.2 4.6-1 6.6.2l-1.8 6.6c-2-1.2-4.100-1.400-6.600-.200z" fill="#e8622c"/>
 <path d="M21.4 13.900c2 1 4.300 1.200 6.800 0l-1.800 6.600c-2.500 1.200-4.800 1-6.800 0z" fill="#8cc63f"/>
 <path d="M11.300 21.200c2.500-1.200 4.600-1 6.600.2l-1.800 6.600c-2-1.200-4.100-1.400-6.600-.2z" fill="#3aa0e8"/>
 <path d="M19.200 21.900c2 1 4.300 1.200 6.800 0l-1.800 6.600c-2.500 1.200-4.800 1-6.800 0z" fill="#fbc926"/>
 </g>
</svg>
<!-- IE -->
<svg class="abs" style="left:73px;top:2px" width="36" height="36" viewBox="0 0 36 36">
 <defs><linearGradient id="ieg" x1="0" y1="0" x2="0" y2="1"><stop offset="0" stop-color="#8adcfa"/><stop offset=".5" stop-color="#4ab4ee"/><stop offset="1" stop-color="#2a8cd8"/></linearGradient></defs>
 <path d="M4 31.500c-2-2 0-9 5-15.500" fill="none" stroke="#e8b41a" stroke-width="2.400" stroke-linecap="round"/>
 <text x="4.500" y="30.500" font-family="Liberation Sans" font-weight="bold" font-size="49" fill="url(#ieg)" stroke="#3a9ae4" stroke-width="1.400">e</text>
 <path d="M9 16c4-5.500 10-10.500 16-12.500 4-1.300 7-.6 7.500 2 .3 1.500-.3 3.500-1.500 5.500" fill="none" stroke="#f4c41c" stroke-width="2.600" stroke-linecap="round"/>
 <path d="M4 31.500c1.800 1.600 6.500.3 12-3.500" fill="none" stroke="#f4c41c" stroke-width="2.200" stroke-linecap="round"/>
</svg>
<!-- explorer button -->
<div class="tbtn" style="left:121px;width:60px"></div>
<svg class="abs" style="left:134px;top:5px" width="34" height="30" viewBox="0 0 34 30">
 <path d="M2 4h9l2 2h14v20H2z" fill="#f1d681" stroke="#c9a94a" stroke-width=".8"/>
 <rect x="4" y="2.500" width="3" height="2" fill="#2fa84a"/><path d="M8 6h8l2 2h12v18H8z" fill="#f6e3a0" stroke="#c9a94a" stroke-width=".8"/>
 <rect x="10.500" y="4.500" width="3" height="2" fill="#d8452c"/><path d="M4 9h26v18H4z" fill="#f9e9b0" stroke="#d0b258" stroke-width=".8"/>
 <rect x="17" y="6" width="3" height="2" fill="#3a8ad8"/>
 <path d="M6 16h22v12h-5v-6H11v6H6z" fill="#bfe0f6" stroke="#7db4dc" stroke-width=".8" opacity=".95"/>
 <rect x="11" y="23" width="12" height="4" fill="#f3d47a"/>
</svg>
<!-- WMP -->
<svg class="abs" style="left:198px;top:8px" width="30" height="28" viewBox="0 0 30 28">
 <rect x="8" y="2" width="18" height="21" fill="#9fcdee" opacity=".7"/><rect x="5" y="1.500" width="18" height="22" fill="#a9d4f2" opacity=".85"/>
 <rect x="1.500" y="1" width="19" height="23" fill="#8cc2ea" stroke="#74aedb" stroke-width=".6"/>
 <circle cx="11" cy="12.500" r="8.700" fill="#f07c1c" stroke="#d96208" stroke-width="1"/>
 <path d="M7.800 7.300v10.400l9-5.200z" fill="#fff"/>
</svg>
<!-- terminal button -->
<div class="tbtn act" style="left:245px;width:60px"></div>
<svg class="abs" style="left:259px;top:7px" width="31" height="25" viewBox="0 0 31 25">
 <rect x=".5" y=".5" width="30" height="24" fill="#fafafa" stroke="#9aa4b0"/>
 <rect x="1" y="1" width="29" height="2.500" fill="#d9dde2"/>
 <rect x="24" y="1.500" width="1.200" height="1.200" fill="#555"/><rect x="26" y="1.500" width="1.200" height="1.200" fill="#555"/><rect x="28" y="1.500" width="1.200" height="1.200" fill="#555"/>
 <rect x="3.500" y="5.500" width="12" height="15" fill="#4a9a78" stroke="#8a98a8" stroke-width=".8"/>
 <path d="M3.900 20.100V12c4-3.500 8-4 11.200-4V5.900H3.900z" fill="#6a90b0" opacity=".85"/>
 <path d="M18 6.500h6M18 8.500h6M18 10.500h6M18 12.500h6M18 14.500h6M18 16.500h6M18 18.500h6M18 20.500h6" stroke="#a8aeb6" stroke-width=".9"/>
 <rect x="26.500" y="5" width="1.800" height="9" fill="#2a4a9a"/><rect x="26.500" y="9" width="1.800" height="5" fill="#3a8a5a"/>
</svg>
<!-- tray -->
<svg class="abs" style="left:1102px;top:18px" width="9" height="6" viewBox="0 0 9 6"><path d="M0 5.500L4.500 .5L9 5.500Z" fill="#fff"/></svg>
<svg class="abs" style="left:1122px;top:12px" width="18" height="18" viewBox="0 0 18 18">
 <path d="M2.500 1v15" stroke="#fff" stroke-width="1.400"/><path d="M3.500 2c3-1.300 5 1 8.500-.3v7c-3.500 1.300-5.500-1-8.500.3z" fill="#fff"/><path d="M9 4.500l3.500-.2v4l-3.500.4z" fill="#d6dde8"/>
 <circle cx="12.500" cy="12.500" r="4.300" fill="#e03a2e" stroke="#fff" stroke-width=".6"/><path d="M10.600 10.600l3.800 3.800M14.400 10.600l-3.800 3.800" stroke="#fff" stroke-width="1.500"/>
</svg>
<svg class="abs" style="left:1147px;top:12px" width="18" height="18" viewBox="0 0 18 18">
 <rect x="6" y="3.500" width="10" height="8" fill="#2a4a78" stroke="#fff" stroke-width="1.300"/><path d="M8 15.500h6M11 12v3.500" stroke="#fff" stroke-width="1.300"/>
 <path d="M1.500 2v3h5V2M4 5v9h3" stroke="#fff" stroke-width="1.300" fill="none"/><path d="M2.800 .8v2M5.200 .8v2" stroke="#fff" stroke-width="1"/>
</svg>
<svg class="abs" style="left:1170px;top:12px" width="18" height="18" viewBox="0 0 18 18">
 <path d="M1.500 6.500h3l4-4v13l-4-4h-3z" fill="#fff" stroke="#c8d0da" stroke-width=".5"/>
 <circle cx="12.500" cy="12.500" r="4.300" fill="#e03a2e" stroke="#fff" stroke-width=".6"/><path d="M10.600 10.600l3.800 3.800M14.400 10.600l-3.800 3.800" stroke="#fff" stroke-width="1.500"/>
</svg>
<div class="clock"><div>9:27 AM</div><div>7/17/2014</div></div>
<div class="showdesk"></div>

</div>
</body>
</html>
